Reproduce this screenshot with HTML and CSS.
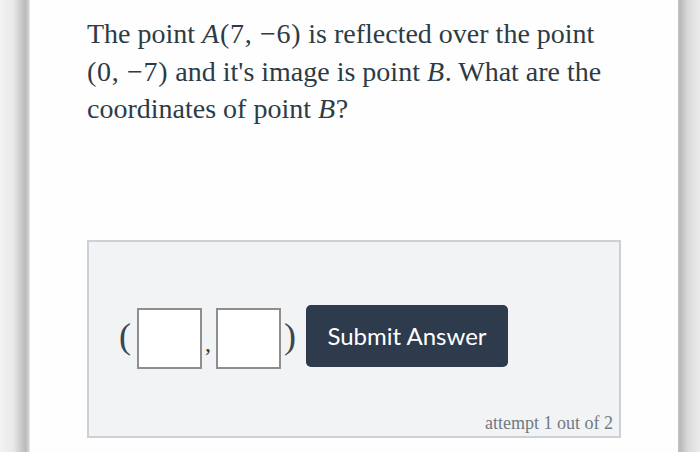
FILE: index.html
```html
<!DOCTYPE html>
<html>
<head>
<meta charset="utf-8">
<link rel="stylesheet" href="styles.css">
</head>
<body>
<div class="frame">
  <div class="gutter gutter-left"></div>
  <main class="panel">
    <p class="question">The point <span class="math"><i>A</i>(7, −6)</span> is reflected over the point <span class="math">(0, −7)</span> and it's image is point <span class="math"><i>B</i></span>. What are the coordinates of point <span class="math"><i>B</i></span>?</p>
    <section class="answer">
      <div class="answer-row">
        <span class="paren">(</span>
        <input class="box" type="text">
        <span class="comma">,</span>
        <input class="box" type="text">
        <span class="paren">)</span>
        <button class="submit">Submit Answer</button>
      </div>
      <div class="attempt">attempt 1 out of 2</div>
    </section>
  </main>
  <div class="gutter gutter-right"></div>
</div>
</body>
</html>
```
FILE: styles.css
```css
html, body {
  margin: 0;
  padding: 0;
  background: #ffffff;
}
.frame {
  display: flex;
  width: 700px;
  height: 452px;
  overflow: hidden;
}
.gutter-left {
  width: 30px;
  background: linear-gradient(to right, #f3f3f3 0%, #e8e8e8 45%, #bababa 85%, #cfcfcf 95%, #f2f2f2 100%);
}
.gutter-right {
  width: 22px;
  background: linear-gradient(to right, #c4c4c4 0%, #b9b9b9 10%, #d9d9d9 45%, #ececec 100%);
}
.panel {
  flex: 1;
  background: #fefefe;
  padding: 15px 0 0 57px;
  box-sizing: border-box;
}
.question {
  margin: 0;
  width: 530px;
  font-family: "Liberation Serif", "DejaVu Serif", serif;
  font-size: 28px;
  line-height: 37.5px;
  color: #2d3b45;
}
.math {
  font-family: "Liberation Serif", serif;
  white-space: nowrap;
  letter-spacing: 0.7px;
}
.math i {
  font-style: italic;
}
.answer {
  margin-top: 112px;
  width: 534px;
  height: 198px;
  box-sizing: border-box;
  background: #f2f3f5;
  border: 2px solid #cdd1d5;
  display: flex;
  flex-direction: column;
}
.answer-row {
  display: flex;
  align-items: flex-start;
  padding: 63px 0 0 27px;
}
.paren {
  width: 18px;
  text-align: center;
  font-family: "Liberation Serif", serif;
  font-size: 36px;
  color: #3a4751;
  line-height: 1;
  align-self: center;
  margin-top: -2px;
}
.box {
  width: 65px;
  height: 61px;
  box-sizing: border-box;
  border: 2px solid #8e8e8e;
  background: #ffffff;
  margin: 3px 0 0 0;
  padding: 0;
}
.paren:first-child {
  margin-right: 3px;
}
.comma {
  width: 14px;
  font-family: "Liberation Serif", serif;
  font-size: 24px;
  color: #2d3b45;
  line-height: 1;
  padding-left: 3px;
  box-sizing: border-box;
  margin-top: 26px;
}
.submit {
  margin-left: 7px;
  width: 202px;
  height: 62px;
  border: none;
  border-radius: 5px;
  background: #2d3b4d;
  color: #ffffff;
  font-family: Lato, "Open Sans", sans-serif;
  font-size: 24px;
  padding: 0;
}
.attempt {
  margin-top: auto;
  align-self: flex-end;
  padding: 0 6px 2px 0;
  font-family: "Liberation Serif", "DejaVu Serif", serif;
  font-size: 18px;
  color: #6f7a82;
}
```
